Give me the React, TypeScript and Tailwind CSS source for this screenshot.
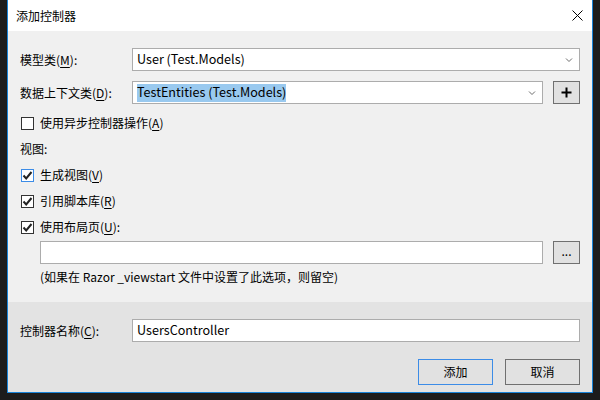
import React from "react";

function Chevron() {
  return (
    <svg width="8" height="6" viewBox="0 0 8 6" className="shrink-0">
      <path d="M1 1.5 L4 4.5 L7 1.5" fill="none" stroke="#6d6d6d" strokeWidth="1" />
    </svg>
  );
}

function Check() {
  return (
    <svg width="11" height="11" viewBox="0 0 11 11">
      <path d="M1.5 5.5 L4.2 8.4 L9.5 2" fill="none" stroke="#222" strokeWidth="2" />
    </svg>
  );
}

function Box({ checked, focus }: { checked?: boolean; focus?: boolean }) {
  return (
    <div
      className={
        "w-[13px] h-[13px] bg-white border flex items-center justify-center shrink-0 " +
        (focus ? "border-[#3c8ce7]" : "border-[#333333]")
      }
    >
      {checked ? <Check /> : null}
    </div>
  );
}

function Key({ k }: { k: string }) {
  return (
    <>
      (<span className="underline underline-offset-2">{k}</span>)
    </>
  );
}

export default function App() {
  return (
    <div className="w-[600px] h-[400px] bg-[#1c1c1c] pl-[7px] text-[12px] text-black font-['Noto_Sans_CJK_SC',sans-serif]">
      <div className="w-[586px] h-[393px] border-l border-r border-b border-[#1883d7] flex flex-col">
        <div className="h-[31px] bg-white flex items-center justify-between pl-[8px] pr-[9px]">
          <span>添加控制器</span>
          <svg width="11" height="11" viewBox="0 0 11 11">
            <path d="M0.5 0.5 L10.5 10.5 M10.5 0.5 L0.5 10.5" stroke="#000" strokeWidth="1" />
          </svg>
        </div>
        <div className="h-[271px] bg-[#f0f0f0] pl-[12px] pr-[12px] pt-[17px] flex flex-col">
          <div className="flex items-center h-[23px]">
            <div className="w-[112px]">
              模型类<Key k="M" />:
            </div>
            <div className="flex-1 h-[23px] bg-white border border-[#acacac] flex items-center pl-[4px] pr-[6px] justify-between">
              <span className="text-[12.6px]">User (Test.Models)</span>
              <Chevron />
            </div>
          </div>
          <div className="flex items-center h-[23px] mt-[10px]">
            <div className="w-[112px]">
              数据上下文类<Key k="D" />:
            </div>
            <div className="w-[411px] h-[23px] bg-white border border-[#acacac] flex items-center pl-[4px] pr-[6px] justify-between">
              <span className="bg-[#99c9ef] h-[18px] flex items-center text-[12.6px]">TestEntities (Test.Models)</span>
              <Chevron />
            </div>
            <div className="ml-[10px] w-[27px] h-[23px] bg-[#e1e1e1] border border-[#707070] flex items-center justify-center">
              <svg width="11" height="11" viewBox="0 0 11 11">
                <path d="M5.5 0.5 V10.5 M0.5 5.5 H10.5" stroke="#000" strokeWidth="2" />
              </svg>
            </div>
          </div>
          <div className="flex items-center h-[20px] mt-[9px] gap-[6px] pl-[1px]">
            <Box />
            <span>
              使用异步控制器操作<Key k="A" />
            </span>
          </div>
          <div className="flex items-center h-[20px] mt-[6px]">视图:</div>
          <div className="flex items-center h-[20px] mt-[6px] gap-[6px] pl-[1px]">
            <Box checked focus />
            <span>
              生成视图<Key k="V" />
            </span>
          </div>
          <div className="flex items-center h-[20px] mt-[6px] gap-[6px] pl-[1px]">
            <Box checked />
            <span>
              引用脚本库<Key k="R" />
            </span>
          </div>
          <div className="flex items-center h-[20px] mt-[6px] gap-[6px] pl-[1px]">
            <Box checked />
            <span>
              使用布局页<Key k="U" />:
            </span>
          </div>
          <div className="flex items-center mt-[4px] pl-[20px]">
            <div className="w-[503px] h-[23px] bg-white border border-[#acacac]" />
            <div className="ml-[10px] w-[27px] h-[23px] bg-[#e1e1e1] border border-[#707070] flex items-center justify-center leading-none pb-[3px]">
              ...
            </div>
          </div>
          <div className="flex items-center h-[20px] mt-[3px] pl-[20px]">
            (如果在 Razor _viewstart 文件中设置了此选项，则留空)
          </div>
        </div>
        <div className="flex-1 bg-[#e3e3e3] pl-[12px] pr-[12px] pt-[17px] flex flex-col">
          <div className="flex items-center h-[23px]">
            <div className="w-[112px]">
              控制器名称<Key k="C" />:
            </div>
            <div className="flex-1 h-[23px] bg-white border border-[#acacac] flex items-center pl-[4px]">
              <span className="text-[12.6px]">UsersController</span>
            </div>
          </div>
          <div className="flex justify-end mt-[17px] gap-[12px]">
            <div className="w-[75px] h-[26px] bg-[#e1e1e1] border border-[#3c8ce7] flex items-center justify-center">
              添加
            </div>
            <div className="w-[75px] h-[26px] bg-[#e1e1e1] border border-[#707070] flex items-center justify-center">
              取消
            </div>
          </div>
        </div>
      </div>
    </div>
  );
}
